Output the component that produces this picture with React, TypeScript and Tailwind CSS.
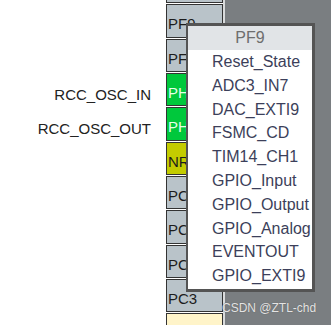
type Pin = {
  name: string;
  label?: string;
  kind: "io" | "osc" | "rst" | "pwr";
  h: number;
  hidden?: boolean;
};

// PF8 and VDD sit mostly outside the crop, so their names are not drawn
const PINS: Pin[] = [
  { name: "PF8", kind: "io", h: 34, hidden: true },
  { name: "PF9", kind: "io", h: 35 },
  { name: "PF10", kind: "io", h: 34 },
  { name: "PH0", label: "RCC_OSC_IN", kind: "osc", h: 34 },
  { name: "PH1", label: "RCC_OSC_OUT", kind: "osc", h: 35 },
  { name: "NRST", kind: "rst", h: 34 },
  { name: "PC0", kind: "io", h: 34 },
  { name: "PC1", kind: "io", h: 35 },
  { name: "PC2", kind: "io", h: 34 },
  { name: "PC3", kind: "io", h: 34 },
  { name: "VDD", kind: "pwr", h: 34, hidden: true },
];

const PIN_STYLE: Record<Pin["kind"], string> = {
  io: "bg-[#b9c3c9] text-[#1c1c1c]",
  osc: "bg-[#00c83c] text-[#e8ffe8]",
  rst: "bg-[#c3cc00] text-[#1c1c1c]",
  pwr: "bg-[#fff4c9] text-[#1c1c1c]",
};

const SIGNALS = [
  "Reset_State",
  "ADC3_IN7",
  "DAC_EXTI9",
  "FSMC_CD",
  "TIM14_CH1",
  "GPIO_Input",
  "GPIO_Output",
  "GPIO_Analog",
  "EVENTOUT",
  "GPIO_EXTI9",
];

function PinRow({ pin }: { pin: Pin }) {
  return (
    <div className="flex shrink-0" style={{ height: pin.h }}>
      <div className="w-[166px] pr-[15px] pt-[13px] text-right text-[15px] leading-[17px] text-[#222]">
        {pin.label}
      </div>
      <div className="w-[57px] pb-[1px]">
        <div
          className={`h-full overflow-hidden whitespace-nowrap border border-[#333] pl-[1px] pt-[10px] text-[15px] leading-[17px] ${PIN_STYLE[pin.kind]}`}
        >
          {pin.hidden ? null : pin.name}
        </div>
      </div>
    </div>
  );
}

export default function App() {
  return (
    <div className="relative flex h-[325px] w-[331px] overflow-hidden bg-white font-['Liberation_Sans',Arial,sans-serif]">
      <div className="-mt-[30px] flex shrink-0 flex-col">
        {PINS.map((p) => (
          <PinRow key={p.name} pin={p} />
        ))}
      </div>
      <div className="w-[2px] shrink-0 bg-[#d9dbdc]" />
      <div className="flex-1 bg-[#7a7e81]" />

      <div className="absolute left-[186px] top-[23px] w-[129px] border-b-[3px] border-l-2 border-r-[3px] border-t-[3px] border-[#545454] bg-white">
        <div className="h-[24px] bg-[#e1e4e7] text-center text-[16px] leading-[24px] text-[#6e6e6e]">
          PF9
        </div>
        <ul className="pb-[1px]">
          {SIGNALS.map((s) => (
            <li key={s} className="pl-[24px] text-[16px] leading-[23.8px] text-[#3c3f5a]">
              {s}
            </li>
          ))}
        </ul>
      </div>

      <div className="absolute left-[222px] top-[301px] text-[12px] leading-[15px] text-[#e4e4e4] [text-shadow:0_0_1px_#555]">
        CSDN @ZTL-chd
      </div>
    </div>
  );
}
